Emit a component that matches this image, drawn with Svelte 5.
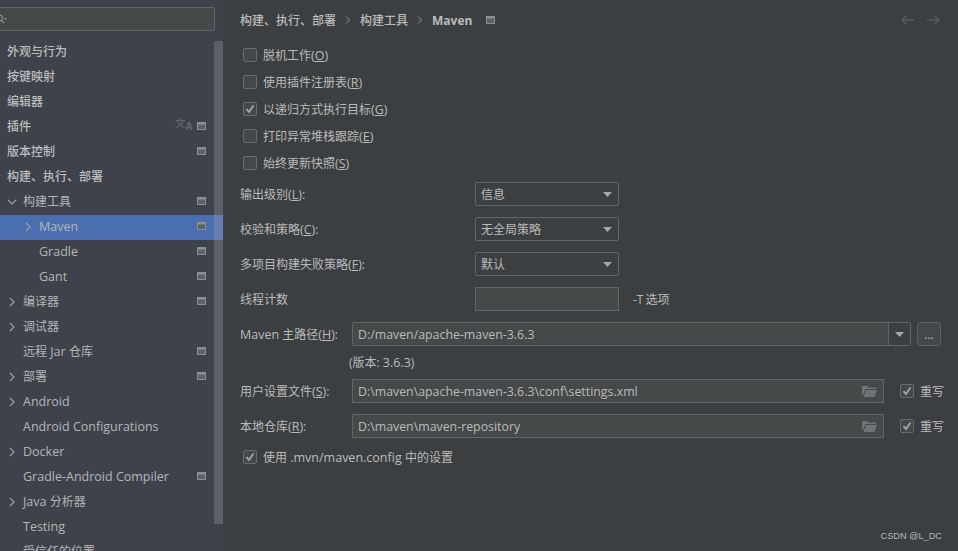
<script lang="ts">
	type Row = { label: string; indent: number; arrow?: 'right' | 'down'; bold?: boolean; project?: boolean; translate?: boolean; selected?: boolean };

	const rows: Row[] = [
		{ label: '外观与行为', indent: 7, bold: true },
		{ label: '按键映射', indent: 7, bold: true },
		{ label: '编辑器', indent: 7, bold: true },
		{ label: '插件', indent: 7, bold: true, project: true, translate: true },
		{ label: '版本控制', indent: 7, bold: true, project: true },
		{ label: '构建、执行、部署', indent: 7, bold: true, arrow: 'down' },
		{ label: '构建工具', indent: 23, arrow: 'down', project: true },
		{ label: 'Maven', indent: 39, arrow: 'right', project: true, selected: true },
		{ label: 'Gradle', indent: 39, project: true },
		{ label: 'Gant', indent: 39, project: true },
		{ label: '编译器', indent: 23, arrow: 'right', project: true },
		{ label: '调试器', indent: 23, arrow: 'right' },
		{ label: '远程 Jar 仓库', indent: 23, project: true },
		{ label: '部署', indent: 23, arrow: 'right', project: true },
		{ label: 'Android', indent: 23, arrow: 'right' },
		{ label: 'Android Configurations', indent: 23 },
		{ label: 'Docker', indent: 23, arrow: 'right' },
		{ label: 'Gradle-Android Compiler', indent: 23, project: true },
		{ label: 'Java 分析器', indent: 23, arrow: 'right' },
		{ label: 'Testing', indent: 23 },
		{ label: '受信任的位置', indent: 23 }
	];

	const checks = [
		{ text: '脱机工作', key: 'O', on: false },
		{ text: '使用插件注册表', key: 'R', on: false },
		{ text: '以递归方式执行目标', key: 'G', on: true },
		{ text: '打印异常堆栈跟踪', key: 'E', on: false },
		{ text: '始终更新快照', key: 'S', on: false }
	];

	const combos = [
		{ text: '输出级别', key: 'L', value: '信息' },
		{ text: '校验和策略', key: 'C', value: '无全局策略' },
		{ text: '多项目构建失败策略', key: 'F', value: '默认' }
	];

	const paths = [
		{ text: '用户设置文件', key: 'S', value: 'D:\\maven\\apache-maven-3.6.3\\conf\\settings.xml' },
		{ text: '本地仓库', key: 'R', value: 'D:\\maven\\maven-repository' }
	];

	// latin runs are set a touch larger than the CJK ones
	function runs(text: string) {
		return text.split(/([\x00-\x7f]+)/).filter(Boolean);
	}
	function isLatin(run: string) {
		return /^[\x00-\x7f]+$/.test(run);
	}
</script>

{#snippet txt(text: string)}
	{#each runs(text) as run}<span class:latin={isLatin(run)}>{run}</span>{/each}
{/snippet}

{#snippet mnemonic(key: string)}
	<span class="latin">(<u>{key}</u>)</span>
{/snippet}

{#snippet projectIcon()}
	<svg class="project" width="9" height="8" viewBox="0 0 9 8"><path d="M0 0h9v8H0z" fill="#5c6067"/><path d="M0 0h9v8H0z M1 2.500v4.500h7V2.500z" fill="#8b9097" fill-rule="evenodd"/></svg>
{/snippet}

{#snippet checkbox(on: boolean)}
	<span class="box">
		{#if on}
			<svg width="12" height="12" viewBox="0 0 12 12"><path d="M2.500 6.200 5 9 9.500 2.500" fill="none" stroke="#a7a7a7" stroke-width="1.800"/></svg>
		{/if}
	</span>
{/snippet}

{#snippet caret()}
	<svg width="9" height="5" viewBox="0 0 9 5"><path d="M0 0h9L4.500 5z" fill="#a6a6a6"/></svg>
{/snippet}

{#snippet folder()}
	<svg class="folder" width="15" height="11" viewBox="0 0 15 11"><path d="M0 0h5l1.500 1.500H14V3H3.500L1 9H0z M4 4h11l-2.500 7H1.500z" fill="#6e7375"/></svg>
{/snippet}

<div class="window">
	<aside class="sidebar">
		<div class="search">
			<svg width="11" height="11" viewBox="0 0 11 11"><circle cx="2.500" cy="4" r="3" fill="none" stroke="#8d8f91" stroke-width="1.200"/><path d="M4.500 6.500 7 9" stroke="#8d8f91" stroke-width="1.200"/><path d="M7 4h3L8.500 6z" fill="#8d8f91"/></svg>
		</div>
		<div class="tree">
			{#each rows as row}
				<div class="row" class:selected={row.selected} class:bold={row.bold} style="padding-left: {row.indent}px">
					{#if row.arrow}
						<svg class="arrow" style="left: {row.indent - 16}px" width="10" height="10" viewBox="0 0 10 10">
							{#if row.arrow === 'right'}
								<path d="M3 1l4 4-4 4" fill="none" stroke="#9da0a2" stroke-width="1.200"/>
							{:else}
								<path d="M1 3l4 4 4-4" fill="none" stroke="#9da0a2" stroke-width="1.200"/>
							{/if}
						</svg>
					{/if}
					<span class="label">{@render txt(row.label)}</span>
					{#if row.translate}
						<span class="translate"><span class="zh">文</span><span class="en">A</span></span>
					{/if}
					{#if row.project}{@render projectIcon()}{/if}
				</div>
			{/each}
			<div class="scrollbar"></div>
		</div>
	</aside>

	<main class="content">
		<header class="crumbs">
			<span>构建、执行、部署</span>
			<svg width="6" height="8" viewBox="0 0 6 8"><path d="M1 0.500 4.500 4 1 7.500" fill="none" stroke="#8c8e90" stroke-width="1"/></svg>
			<span>构建工具</span>
			<svg width="6" height="8" viewBox="0 0 6 8"><path d="M1 0.500 4.500 4 1 7.500" fill="none" stroke="#8c8e90" stroke-width="1"/></svg>
			<span class="current">Maven</span>
			{@render projectIcon()}
			<div class="nav">
				<svg width="14" height="12" viewBox="0 0 14 12"><path d="M14 6H2M6.500 1.500 2 6l4.500 4.500" fill="none" stroke="#585b5d" stroke-width="1.600"/></svg>
				<svg width="14" height="12" viewBox="0 0 14 12"><path d="M0 6h12M7.500 1.500 12 6l-4.500 4.500" fill="none" stroke="#585b5d" stroke-width="1.600"/></svg>
			</div>
		</header>

		<section class="checks">
			{#each checks as c}
				<label class="check">
					{@render checkbox(c.on)}
					<span>{c.text}{@render mnemonic(c.key)}</span>
				</label>
			{/each}
		</section>

		<section class="combos">
			{#each combos as c}
				<span>{c.text}{@render mnemonic(c.key)}:</span>
				<div class="combo"><span>{c.value}</span>{@render caret()}</div>
			{/each}
			<span>线程计数</span>
			<div class="threads">
				<div class="field blank"></div>
				<span class="tight">-T 选项</span>
			</div>
		</section>

		<section class="paths">
			<span><span class="latin">Maven</span>&nbsp;主路径{@render mnemonic('H')}:</span>
			<div class="home">
				<div class="field grow">
					<span class="value">D:/maven/apache-maven-3.6.3</span>
					<div class="drop">{@render caret()}</div>
				</div>
				<div class="more">...</div>
			</div>
			<div class="version">(版本: <span class="latin">3.6.3</span>)</div>
			{#each paths as p}
				<span>{p.text}{@render mnemonic(p.key)}:</span>
				<div class="override">
					<div class="field grow"><span class="value">{p.value}</span>{@render folder()}</div>
					<label class="check inline">{@render checkbox(true)}<span>重写</span></label>
				</div>
			{/each}
		</section>

		<label class="check last">
			{@render checkbox(true)}
			<span>{@render txt('使用 .mvn/maven.config 中的设置')}</span>
		</label>
	</main>

	<div class="watermark">CSDN @L_DC</div>
</div>

<style>
	:global(body) {
		margin: 0;
		background: #3c3f41;
		overflow: hidden;
	}

	.window {
		position: relative;
		display: flex;
		width: 958px;
		height: 551px;
		overflow: hidden;
		background: #3c3f41;
		color: #bbbbbb;
		font-family: "Open Sans", "Noto Sans CJK SC", sans-serif;
		font-size: 12px;
	}

	.latin {
		font-size: 12.500px;
	}

	.value {
		font-size: 12.350px;
	}

	.sidebar {
		flex: none;
		width: 223px;
		height: 551px;
		overflow: hidden;
		background: #3f424a;
	}

	.search {
		display: flex;
		align-items: center;
		box-sizing: border-box;
		width: 219px;
		height: 24px;
		margin: 7px 0 9px -4px;
		border: 1px solid #646464;
		border-radius: 2px;
		background: #45494a;
	}

	.tree {
		position: relative;
	}

	.row {
		position: relative;
		display: flex;
		align-items: center;
		box-sizing: border-box;
		height: 25px;
		padding-right: 17px;
		padding-bottom: 3px;
		white-space: nowrap;
		color: #b4b6b8;
	}

	.row.bold {
		font-weight: 500;
		color: #bbbdbf;
	}

	.row.selected {
		background: #4b6eaf;
	}

	.label {
		flex: 1;
	}

	.arrow {
		position: absolute;
		top: 7px;
	}

	.translate {
		position: relative;
		width: 15px;
		height: 14px;
		margin-right: 7px;
		color: #62666c;
	}

	.zh {
		position: absolute;
		left: 0;
		top: -4px;
		font-size: 10.500px;
	}

	.en {
		position: absolute;
		left: 10.500px;
		top: 0;
		font-size: 10px;
		font-weight: 700;
	}

	.scrollbar {
		position: absolute;
		left: 214px;
		top: 1px;
		width: 9px;
		height: 483px;
		background: rgba(160, 165, 180, 0.3);
	}

	.content {
		flex: 1;
		padding: 0 17px;
		min-width: 0;
	}

	.crumbs {
		display: flex;
		align-items: center;
		gap: 9px;
		height: 40px;
	}

	.crumbs span {
		font-weight: 500;
		color: #bbbbbb;
	}

	.crumbs .current {
		margin-right: 5px;
		font-weight: 700;
	}

	.nav {
		display: flex;
		gap: 13px;
		margin-left: auto;
	}

	.checks {
		display: flex;
		flex-direction: column;
		gap: 7px;
		margin: 5px 0 0 3px;
	}

	.check {
		display: flex;
		align-items: center;
		gap: 6px;
		height: 20px;
	}

	.box {
		display: flex;
		align-items: center;
		justify-content: center;
		box-sizing: border-box;
		width: 14px;
		height: 14px;
		border: 1px solid #6b6b6b;
		border-radius: 2px;
		background: #43494a;
	}

	.combos {
		display: grid;
		grid-template-columns: 235px 144px;
		grid-auto-rows: 24px;
		row-gap: 11px;
		align-items: center;
		margin-top: 9px;
	}

	.combo {
		display: flex;
		align-items: center;
		justify-content: space-between;
		box-sizing: border-box;
		height: 24px;
		padding: 0 6px 0 5px;
		border: 1px solid #646464;
		border-radius: 2px;
		background: #3c3f41;
	}

	.threads {
		display: flex;
		align-items: center;
		gap: 14px;
		white-space: nowrap;
	}

	.tight {
		word-spacing: -1px;
	}

	.field {
		display: flex;
		align-items: center;
		justify-content: space-between;
		box-sizing: border-box;
		height: 24px;
		padding: 0 6px 0 5px;
		border: 1px solid #646464;
		background: #45494a;
		white-space: nowrap;
	}

	.field.blank {
		flex: none;
		width: 144px;
	}

	.grow {
		flex: 1;
		min-width: 0;
	}

	.paths {
		display: grid;
		grid-template-columns: 112px 589px;
		grid-template-rows: 24px 11px 24px 24px;
		row-gap: 11px;
		align-items: center;
		margin-top: 11px;
	}

	.home {
		display: flex;
		gap: 6px;
		width: 589px;
	}

	.home .field {
		position: relative;
		border-radius: 2px;
	}

	.drop {
		position: absolute;
		right: 0;
		top: 0;
		display: flex;
		align-items: center;
		justify-content: center;
		box-sizing: border-box;
		width: 22px;
		height: 22px;
		border-left: 1px solid #646464;
		background: #3c3f41;
	}

	.more {
		display: flex;
		align-items: center;
		justify-content: center;
		flex: none;
		box-sizing: border-box;
		width: 24px;
		height: 24px;
		border: 1px solid #5e6060;
		border-radius: 4px;
		background: #44484a;
	}

	.version {
		grid-column: 2;
		line-height: 11px;
		margin-left: -3px;
	}

	.override {
		display: flex;
		width: 592px;
	}

	.inline {
		flex: none;
		width: 60px;
		padding-left: 16px;
		box-sizing: border-box;
		white-space: nowrap;
		align-self: center;
	}

	.last {
		margin: 9px 0 0 3px;
	}

	.watermark {
		position: absolute;
		right: 16px;
		bottom: 10px;
		font-family: "Liberation Sans", sans-serif;
		font-size: 9.200px;
		color: #b5b7b8;
	}
</style>
